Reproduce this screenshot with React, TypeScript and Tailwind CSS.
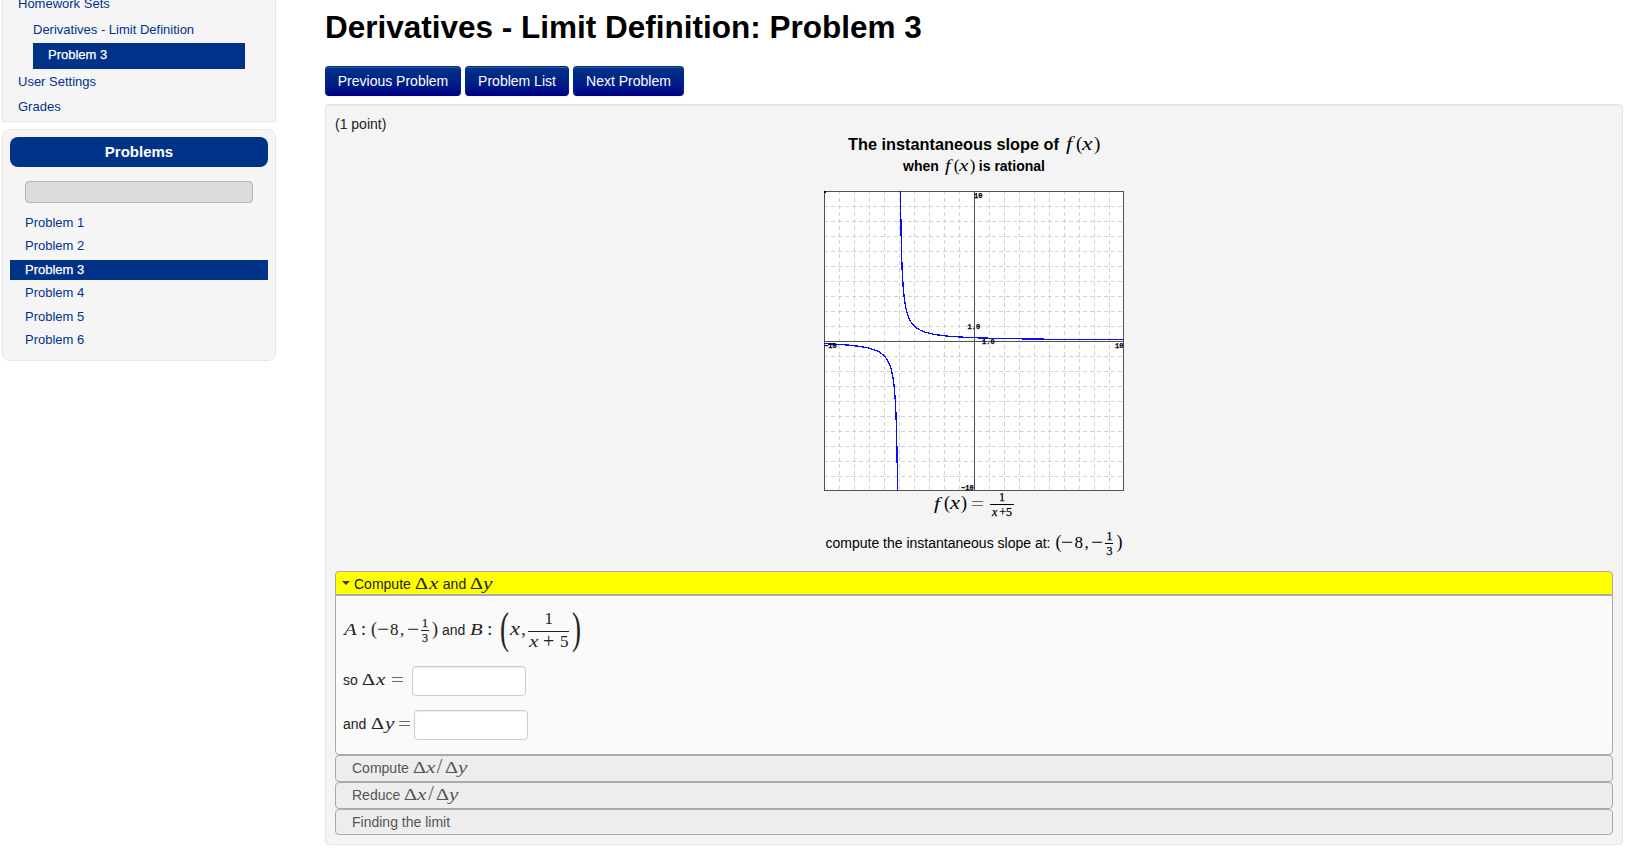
import React from 'react';

const problems = [1, 2, 3, 4, 5, 6];
const activeProblem = 3;

interface ChildrenProps {
  children?: React.ReactNode;
  className?: string;
}

// Row whose baseline sits at the bottom of the strut
const Row: React.FC<ChildrenProps & { strut?: string }> = ({ children, className = '', strut = 'h-[15px]' }) => (
  <div className={`flex items-baseline whitespace-pre leading-[0] ${className}`}>
    <span className={`w-0 shrink-0 ${strut}`} />
    {children}
  </div>
);

// Upright math glyph (digits, brackets, operators)
const Mn: React.FC<ChildrenProps> = ({ children, className = '' }) => (
  <span className={`shrink-0 font-['Liberation_Serif',serif] leading-[0] ${className}`}>{children}</span>
);

// Italic math variable
const Mi: React.FC<ChildrenProps> = ({ children, className = '' }) => (
  <span className={`shrink-0 font-['Liberation_Serif',serif] italic leading-[0] ${className}`}>
    <span className="inline-block origin-left scale-x-[1.25]">{children}</span>
  </span>
);

const Delta: React.FC<ChildrenProps> = ({ className = '' }) => (
  <Mn className={`text-[17.5px] [-webkit-text-stroke:0.15px] ${className}`}>
    <span className="inline-block origin-left scale-x-[1.15]">Δ</span>
  </Mn>
);

const Minus: React.FC<ChildrenProps> = ({ className = '' }) => (
  <Mn className={`text-[18px] ${className}`}>
    <span className="inline-block origin-left scale-x-[1.2]">−</span>
  </Mn>
);

const Equals: React.FC<ChildrenProps> = ({ className = '' }) => (
  <Mn className={`text-[19px] text-[#666] ${className}`}>
    <span className="inline-block origin-left translate-y-px scale-x-[1.2]">=</span>
  </Mn>
);

const SmallFraction: React.FC<{ top: string; bottom: React.ReactNode; className?: string }> = ({ top, bottom, className = '' }) => (
  <span className={`flex shrink-0 flex-col items-center self-start font-['Liberation_Serif',serif] text-[12px] [-webkit-text-stroke:0.25px] ${className}`}>
    <span className="h-[13px] leading-[12px]">{top}</span>
    <span className="h-px w-full bg-current" />
    <span className="h-[14px] leading-[14px]">{bottom}</span>
  </span>
);

const PointA: React.FC<{ fractionClass: string }> = ({ fractionClass }) => (
  <>
    <Mn className="w-[6px] text-[18px]">(</Mn>
    <Minus className="w-[13px]" />
    <Mn className="w-[10px] text-[17px]">8</Mn>
    <Mn className="w-[7px] text-[17px]">,</Mn>
    <Minus className="w-[14px]" />
    <SmallFraction top="1" bottom="3" className={`w-[8px] ${fractionClass}`} />
    <Mn className="ml-[3px] w-[6px] text-[18px]">)</Mn>
  </>
);

const DeltaRatio: React.FC = () => (
  <>
    <Delta className="ml-[4px] w-[13px]" />
    <Mi className="w-[11px] text-[17px]">x</Mi>
    <Mn className="w-[8px] text-[20px]">/</Mn>
    <Delta className="w-[13px]" />
    <Mi className="text-[17px]">y</Mi>
  </>
);

const NavButton: React.FC<ChildrenProps> = ({ children, className = '' }) => (
  <button
    className={`h-[30px] rounded-[4px] border border-[#002a80] border-b-[#000077] bg-linear-to-b from-[#003388] to-[#000088] text-center text-[14px] leading-[28px] text-white shadow-[inset_0_1px_0_rgba(255,255,255,0.2),0_1px_2px_rgba(0,0,0,0.05)] ${className}`}
  >
    {children}
  </button>
);

const AnswerInput: React.FC<ChildrenProps> = ({ className = '' }) => (
  <input
    type="text"
    className={`h-[30px] w-[114px] shrink-0 self-start rounded-[4px] border border-[#ccc] bg-white px-1.5 text-[14px] shadow-[inset_0_1px_1px_rgba(0,0,0,0.075)] ${className}`}
  />
);

// Samples 1/(x+5) into svg points, 15px per unit with the origin at (150, 150)
const curve = (from: number, to: number) => {
  const points: string[] = [];
  const steps = 400;
  for (let i = 0; i <= steps; i++) {
    const y = from * Math.pow(to / from, i / steps);
    const x = 1 / y - 5;
    points.push(`${(150 + 15 * x).toFixed(2)},${(149.7 - 15 * y).toFixed(2)}`);
  }
  return points.join(' ');
};

const Graph: React.FC = () => {
  const lines = Array.from({ length: 19 }, (_, i) => (i + 1) * 15 + 0.5).filter((p) => p !== 150.5);
  return (
    <svg width="300" height="300" viewBox="0 0 300 300" className="block overflow-hidden bg-white">
      <g stroke="#d2d2d2" strokeDasharray="4 3" shapeRendering="crispEdges">
        {lines.map((p) => (
          <React.Fragment key={p}>
            <line x1={p} y1="0" x2={p} y2="300" />
            <line x1="0" y1={p} x2="300" y2={p} />
          </React.Fragment>
        ))}
      </g>
      <g stroke="#505050" fill="none" shapeRendering="crispEdges">
        <rect x="0.5" y="0.5" width="299" height="299" />
        <line x1="150.5" y1="0" x2="150.5" y2="300" />
        <line x1="0" y1="150.5" x2="300" y2="150.5" />
      </g>
      <g stroke="#0a0aff" strokeWidth="1.3" fill="none" shapeRendering="crispEdges">
        <polyline points={curve(10, 1 / 15)} />
        <polyline points={curve(-0.2, -10)} />
      </g>
      <rect width="2" height="2" fill="#000" />
      <g className="font-['Liberation_Mono',monospace] text-[7px] font-bold" fill="#000" stroke="#000" strokeWidth="0.25">
        <text x="150" y="6.5">10</text>
        <text x="143.5" y="137.5">1.0</text>
        <text x="158" y="153">1.0</text>
        <text x="0" y="156.5">−10</text>
        <text x="291" y="156.5">10</text>
        <text x="137" y="298.5">−10</text>
      </g>
    </svg>
  );
};

const Sidebar: React.FC = () => (
  <div className="ml-[2px] w-[274px] shrink-0 text-[13px] text-[#003388]">
    <div className="h-[122px] overflow-hidden border border-t-0 border-[#e6e6e6] bg-[#f5f5f5] pl-[15px] leading-[26px]">
      <div className="-mt-[9px]">Homework Sets</div>
      <div className="pl-[15px]">Derivatives - Limit Definition</div>
      <div className="ml-[15px] h-[26px] w-[212px] bg-[#003388] pl-[15px] leading-[24px] text-white [-webkit-text-stroke:0.25px]">Problem 3</div>
      <div>User Settings</div>
      <div className="leading-[24px]">Grades</div>
    </div>

    <div className="mt-[7px] h-[232px] rounded-[8px] border border-[#e6e6e6] bg-[#f5f5f5] p-[7px]">
      <div className="h-[30px] rounded-[8px] bg-[#003388] text-center text-[15px] leading-[30px] font-bold text-white">Problems</div>
      <div className="mx-[15px] mt-[14px] h-[22px] rounded-[4px] border border-[#b3b3b3] bg-[#dcdcdc]" />
      <ul className="mt-[10px] flex flex-col gap-[3.4px] leading-[19px]">
        {problems.map((n) => (
          <li
            key={n}
            className={`h-[20px] pl-[15px] ${n === activeProblem ? 'bg-[#003388] text-white [-webkit-text-stroke:0.25px]' : ''}`}
          >
            Problem {n}
          </li>
        ))}
      </ul>
    </div>
  </div>
);

const App: React.FC = () => {
  return (
    <div className="flex h-[860px] w-[1637px] overflow-hidden bg-white font-['Liberation_Sans',Arial,sans-serif] text-black">
      <Sidebar />

      <div className="ml-[49px] w-[1298px] pt-[7px] text-[14px]">
        <h1 className="text-[31.5px] leading-[40px] font-bold">Derivatives - Limit Definition: Problem 3</h1>
        <div className="mt-[19px] flex gap-[4px]">
          <NavButton className="w-[136px]">Previous Problem</NavButton>
          <NavButton className="w-[104px]">Problem List</NavButton>
          <NavButton className="w-[111px]">Next Problem</NavButton>
        </div>

        <div className="mt-[8px] h-[741px] rounded-[4px] border border-[#e3e3e3] bg-[#f4f4f4] px-[9px] pt-[10px] shadow-[inset_0_1px_1px_rgba(0,0,0,0.05)]">
          <Row className="h-[20px] text-[#222]" strut="h-[14px]">(1 point)</Row>

          <Row className="h-[21px] justify-center">
            <span className="text-[16.3px] font-bold">The instantaneous slope of</span>
            <Mi className="ml-[7px] w-[10px] text-[18px]">f</Mi>
            <Mn className="w-[6px] text-[19px]">(</Mn>
            <Mi className="w-[12px] text-[19px]">x</Mi>
            <Mn className="w-[6px] text-[19px]">)</Mn>
          </Row>
          <Row className="h-[35px] justify-center">
            <span className="font-bold">when</span>
            <Mi className="ml-[6px] w-[9px] text-[16px]">f</Mi>
            <Mn className="w-[5px] text-[17px]">(</Mn>
            <Mi className="w-[11px] text-[17px]">x</Mi>
            <Mn className="w-[9px] text-[17px]">)</Mn>
            <span className="font-bold">is rational</span>
          </Row>

          <div className="flex justify-center">
            <Graph />
          </div>

          <Row className="h-[42px] justify-center" strut="h-[18px]">
            <Mi className="w-[10px] text-[17px]">f</Mi>
            <Mn className="w-[6px] text-[18px]">(</Mn>
            <Mi className="w-[11px] text-[18px]">x</Mi>
            <Mn className="w-[10px] text-[18px]">)</Mn>
            <Equals className="w-[19px]" />
            <SmallFraction
              top="1"
              className="w-[24px]"
              bottom={
                <>
                  <i className="mr-[2px]">x</i>+5
                </>
              }
            />
          </Row>
          <Row className="h-[38px] justify-center">
            <span className="mr-[5px]">compute the instantaneous slope at:</span>
            <PointA fractionClass="-mt-[3px]" />
          </Row>

          <Row className="h-[24px] rounded-t-[4px] border border-[#aaa] bg-[#ffff00] text-[#222]" strut="h-[17px]">
            <svg width="8" height="4" viewBox="0 0 8 4" className="mt-[9px] ml-[6px] shrink-0 self-start">
              <path d="M0 0h8L4 4z" fill="#333" />
            </svg>
            <span className="ml-[4px]">Compute</span>
            <Delta className="ml-[4px] w-[14px]" />
            <Mi className="w-[14px] text-[17px]">x</Mi>
            <span>and</span>
            <Delta className="ml-[4px] w-[13px]" />
            <Mi className="text-[17px]">y</Mi>
          </Row>
          <div className="h-[160px] rounded-b-[4px] border border-[#aaa] bg-[#fafafa] pl-[7px] text-[#222]">
            <Row className="h-[70px]" strut="h-[39px]">
              <Mi className="ml-px w-[17px] text-[16.5px]">A</Mi>
              <Mn className="w-[10px] text-[18px]">:</Mn>
              <PointA fractionClass="mt-[21px]" />
              <span className="ml-[4px]">and</span>
              <Mi className="ml-[5px] w-[17px] text-[16.5px]">B</Mi>
              <Mn className="w-[13px] text-[18px]">:</Mn>
              <Mn className="w-[10px] text-[18px]">
                <span className="inline-block origin-[0_1px] scale-x-[1.5] scale-y-[2.5]">(</span>
              </Mn>
              <Mi className="w-[11px] text-[18px]">x</Mi>
              <Mn className="w-[7px] text-[18px]">,</Mn>
              <span className="mt-[13px] flex w-[41px] shrink-0 flex-col items-center self-start font-['Liberation_Serif',serif] text-[17px]">
                <span className="h-[22px] leading-[20px]">1</span>
                <span className="h-px w-full bg-[#222]" />
                <span className="flex h-[19px] leading-[19px]">
                  <Mi className="w-[14px] leading-[19px]">x</Mi>
                  <span className="w-[17px] text-[20px]">+</span>5
                </span>
              </span>
              <Mn className="ml-[3px] text-[18px]">
                <span className="inline-block origin-[0_1px] scale-x-[1.5] scale-y-[2.5]">)</span>
              </Mn>
            </Row>
            <Row className="mb-[14px] h-[30px]" strut="h-[19px]">
              <span>so</span>
              <Delta className="ml-[4px] w-[14px]" />
              <Mi className="w-[15px] text-[17px]">x</Mi>
              <Equals className="w-[11px]" />
              <AnswerInput className="ml-[10px]" />
            </Row>
            <Row className="h-[30px]" strut="h-[19px]">
              <span>and</span>
              <Delta className="ml-[5px] w-[14px]" />
              <Mi className="w-[13px] text-[17px]">y</Mi>
              <Equals className="w-[11px]" />
              <AnswerInput className="ml-[5px]" />
            </Row>
          </div>

          <Row className="h-[27px] rounded-[4px] border border-[#aaa] bg-[#ededed] pl-[16px] text-[#555]" strut="h-[17px]">
            <span>Compute</span>
            <DeltaRatio />
          </Row>
          <Row className="h-[27px] rounded-[4px] border border-[#aaa] bg-[#ededed] pl-[16px] text-[#555]" strut="h-[17px]">
            <span>Reduce</span>
            <DeltaRatio />
          </Row>
          <Row className="h-[26px] rounded-[4px] border border-[#aaa] bg-[#ededed] pl-[16px] text-[#555]" strut="h-[17px]">
            <span>Finding the limit</span>
          </Row>
        </div>
      </div>
    </div>
  );
};

export default App;
